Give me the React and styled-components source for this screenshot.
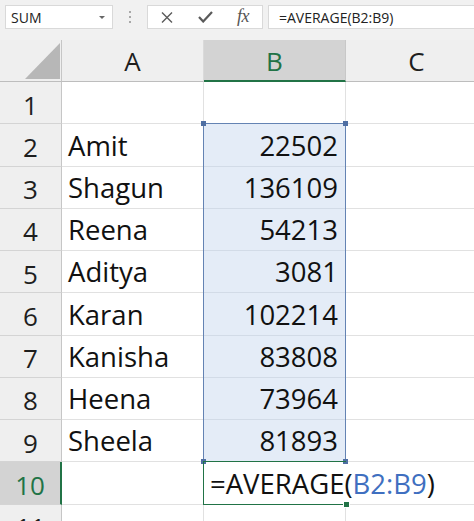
import React from 'react';
import styled, { createGlobalStyle } from 'styled-components';

const Global = createGlobalStyle`
  html, body { margin: 0; padding: 0; background: #fff; }
  body { font-family: "Open Sans", "Liberation Sans", sans-serif; }
`;

const ROW_H = 42.25;
const GREEN = '#217346';

const Page = styled.div`
  width: 474px;
  height: 521px;
  overflow: hidden;
  background: #fff;
`;

const Toolbar = styled.div`
  height: 40px;
  box-sizing: border-box;
  background: #f1f1f1;
  display: flex;
  align-items: flex-start;
  padding: 5px 0 0 5px;
`;

const Box = styled.div`
  height: 24px;
  box-sizing: border-box;
  background: #fff;
  border: 1px solid #d9d9d9;
  display: flex;
  align-items: center;
`;

const NameBox = styled(Box)`
  width: 108px;
  flex: none;
  justify-content: space-between;
  padding: 0 7px 0 5px;
  font-size: 14px;
  color: #222;
`;

const Caret = styled.span`
  width: 0;
  height: 0;
  border-left: 3px solid transparent;
  border-right: 3px solid transparent;
  border-top: 3px solid #666;
`;

const Grip = styled.div`
  width: 34px;
  height: 24px;
  flex: none;
  display: flex;
  flex-direction: column;
  align-items: center;
  justify-content: center;
  gap: 3px;
  & > i {
    width: 2px;
    height: 2px;
    background: #a8a8a8;
    display: block;
  }
`;

const ButtonGroup = styled(Box)`
  width: 116px;
  flex: none;
  margin-right: 5px;
`;

const IconSlot = styled.div`
  flex: 1;
  height: 100%;
  display: flex;
  align-items: center;
  justify-content: center;
  color: #555;
`;

const Fx = styled.span`
  font-family: "Liberation Serif", "DejaVu Serif", serif;
  font-style: italic;
  font-size: 18px;
  color: #555;
  letter-spacing: -0.5px;
  margin-top: -2px;
`;

const FormulaBox = styled(Box)`
  flex: 1;
  margin-right: -6px;
  padding-left: 10px;
  font-size: 14px;
  color: #222;
`;

const Sheet = styled.div`
  width: 488px;
`;

const HeaderRow = styled.div`
  display: flex;
  height: 42px;
  background: #efefef;
`;

const Corner = styled.div`
  width: 62px;
  flex: none;
  box-sizing: border-box;
  border-right: 1px solid #c6c6c6;
  border-bottom: 1px solid #bdbdbd;
  display: flex;
  align-items: flex-end;
  justify-content: flex-end;
  padding: 0 1px 2px 0;
`;

const ColHeader = styled.div`
  width: 142px;
  flex: none;
  box-sizing: border-box;
  display: flex;
  align-items: center;
  justify-content: center;
  font-size: 26px;
  line-height: 1;
  padding-top: ${p => (p.$active ? '2px' : '1px')};
  color: ${p => (p.$active ? GREEN : '#1e1e1e')};
  background: ${p => (p.$active ? '#d3d3d3' : '#efefef')};
  border-right: 1px solid ${p => (p.$active ? '#c8c8c8' : '#dadada')};
  border-bottom: ${p => (p.$active ? `2px solid ${GREEN}` : '1px solid #bdbdbd')};
`;

const Body = styled.div`
  position: relative;
`;

const Row = styled.div`
  display: flex;
  height: ${ROW_H}px;
`;

const RowHeader = styled.div`
  width: 62px;
  flex: none;
  box-sizing: border-box;
  display: flex;
  align-items: center;
  justify-content: center;
  font-size: 26px;
  line-height: 1;
  padding-top: 4px;
  color: ${p => (p.$active ? GREEN : '#1e1e1e')};
  background: ${p => (p.$active ? '#d3d3d3' : '#efefef')};
  border-right: ${p => (p.$active ? `2px solid ${GREEN}` : '1px solid #c6c6c6')};
  border-bottom: 1px solid #d4d4d4;
`;

const Cell = styled.div`
  width: 142px;
  flex: none;
  box-sizing: border-box;
  display: flex;
  align-items: center;
  justify-content: ${p => (p.$align === 'right' ? 'flex-end' : 'flex-start')};
  padding: 1px 7px 0 6px;
  font-size: 27.5px;
  line-height: 1;
  color: #111;
  white-space: nowrap;
  overflow: visible;
  background: ${p => (p.$selected ? '#e4ecf7' : 'transparent')};
  border-right: 1px solid ${p => (p.$editing ? 'transparent' : p.$selected ? '#d2dbe7' : '#e1e1e1')};
  border-bottom: 1px solid ${p => (p.$selected ? '#d2dbe7' : '#e1e1e1')};
  position: relative;
  z-index: ${p => (p.$editing ? 2 : 1)};
`;

const Ref = styled.span`
  color: #3f6fc0;
`;

const Selection = styled.div`
  position: absolute;
  left: 203px;
  top: ${ROW_H - 1}px;
  width: 143px;
  height: ${ROW_H * 8 + 1}px;
  box-sizing: border-box;
  border: 1px solid #6483b3;
  pointer-events: none;
  z-index: 3;
`;

const Handle = styled.span`
  position: absolute;
  width: 5px;
  height: 5px;
  background: ${p => p.$color || '#4f6fa3'};
  ${p => (p.$top ? 'top: -3px;' : 'bottom: -3px;')}
  ${p => (p.$left ? 'left: -3px;' : 'right: -3px;')}
`;

const ActiveFrame = styled.div`
  position: absolute;
  left: 203px;
  top: ${ROW_H * 9 - 1}px;
  width: 143px;
  height: ${ROW_H + 1}px;
  box-sizing: border-box;
  border: 1px solid ${GREEN};
  border-right: none;
  pointer-events: none;
  z-index: 3;
`;

const FillHandle = styled.span`
  position: absolute;
  right: -3px;
  bottom: -3px;
  width: 5px;
  height: 5px;
  background: ${GREEN};
  outline: 1px solid #fff;
`;

const names = ['', 'Amit', 'Shagun', 'Reena', 'Aditya', 'Karan', 'Kanisha', 'Heena', 'Sheela', '', ''];
const values = ['', '22502', '136109', '54213', '3081', '102214', '83808', '73964', '81893', '', ''];

function XIcon() {
  return (
    <svg width="12" height="11" viewBox="0 0 12 11">
      <path d="M1 0.5 L11 10.5 M11 0.5 L1 10.5" stroke="#5a5a5a" strokeWidth="1.4" fill="none" />
    </svg>
  );
}

function CheckIcon() {
  return (
    <svg width="15" height="12" viewBox="0 0 15 12">
      <path d="M1 6 L5.2 10.5 L14 1" stroke="#5a5a5a" strokeWidth="2.2" fill="none" strokeLinejoin="miter" />
    </svg>
  );
}

function CornerTriangle() {
  return (
    <svg width="35" height="36" viewBox="0 0 35 36">
      <path d="M0 36 L35 36 L35 0 Z" fill="#b7b7b7" />
    </svg>
  );
}

export default function App() {
  return (
    <Page>
      <Global />
      <Toolbar>
        <NameBox>
          <span>SUM</span>
          <Caret />
        </NameBox>
        <Grip>
          <i />
          <i />
          <i />
        </Grip>
        <ButtonGroup>
          <IconSlot><XIcon /></IconSlot>
          <IconSlot><CheckIcon /></IconSlot>
          <IconSlot><Fx>fx</Fx></IconSlot>
        </ButtonGroup>
        <FormulaBox>=AVERAGE(B2:B9)</FormulaBox>
      </Toolbar>
      <Sheet>
        <HeaderRow>
          <Corner><CornerTriangle /></Corner>
          <ColHeader>A</ColHeader>
          <ColHeader $active>B</ColHeader>
          <ColHeader>C</ColHeader>
        </HeaderRow>
        <Body>
          {names.map((name, i) => {
            const rowNum = i + 1;
            const selected = rowNum >= 2 && rowNum <= 9;
            const editing = rowNum === 10;
            return (
              <Row key={rowNum}>
                <RowHeader $active={editing}>{rowNum}</RowHeader>
                <Cell>{name}</Cell>
                <Cell $align={editing ? 'left' : 'right'} $selected={selected} $editing={editing}>
                  {editing ? (
                    <>
                      =AVERAGE(<Ref>B2:B9</Ref>)
                    </>
                  ) : (
                    values[i]
                  )}
                </Cell>
                <Cell />
              </Row>
            );
          })}
          <Selection>
            <Handle $top $left />
            <Handle $top />
            <Handle $left />
            <Handle />
          </Selection>
          <ActiveFrame>
            <FillHandle />
          </ActiveFrame>
        </Body>
      </Sheet>
    </Page>
  );
}
